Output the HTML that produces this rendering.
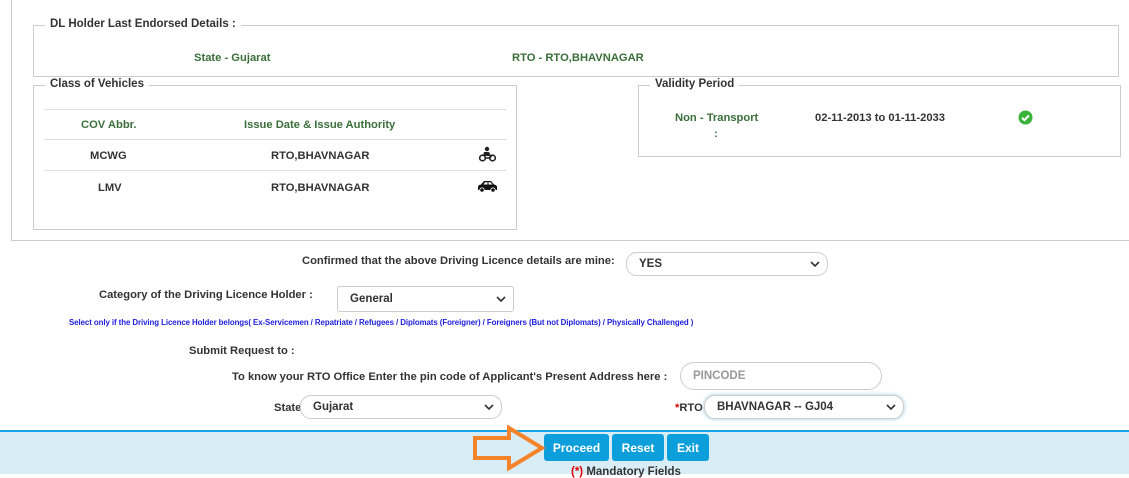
<!DOCTYPE html>
<html><head><style>
*{margin:0;padding:0;box-sizing:border-box}
body{width:1129px;height:474px;overflow:hidden;background:#fff;font-family:"Liberation Sans",Arial,sans-serif;font-weight:bold;font-size:11.2px;color:#333;position:relative}
.a{position:absolute;white-space:nowrap}
.fs{position:absolute;border:1px solid #ccc}
.lg{position:absolute;background:#fff;padding:0 5px;top:-8px;color:#333;font-size:11.5px}
.g{color:#3a6e3a}
.hl{position:absolute;left:44px;width:462px;height:1px;background:#ddd}
.sel{position:absolute;border:1px solid #ccc;background:#fff;font-size:11.5px;padding-left:12px;display:flex;align-items:center;color:#333}
.sel svg{position:absolute;right:7px;top:50%;margin-top:-3px}
.btn{position:absolute;top:434px;height:27px;background:#0d9fdc;color:#fff;border-radius:3px;font-size:12px;display:flex;align-items:center;justify-content:center}
</style></head><body>
<div class="a" style="left:11px;top:0;width:1px;height:241px;background:#ccc"></div>
<div class="a" style="left:11px;top:240px;width:1118px;height:1px;background:#ccc"></div>

<div class="fs" style="left:33px;top:25px;width:1086px;height:52px"><span class="lg" style="left:11px">DL Holder Last Endorsed Details :</span></div>
<div class="a g" style="left:194px;top:52px">State - Gujarat</div>
<div class="a g" style="left:512px;top:52px">RTO - RTO,BHAVNAGAR</div>

<div class="fs" style="left:33px;top:85px;width:484px;height:145px"><span class="lg" style="left:11px">Class of Vehicles</span></div>
<div class="hl" style="top:109px"></div>
<div class="hl" style="top:139px"></div>
<div class="hl" style="top:170px"></div>
<div class="a g" style="left:81px;top:119px">COV Abbr.</div>
<div class="a g" style="left:244px;top:119px">Issue Date &amp; Issue Authority</div>
<div class="a" style="left:90px;top:150px">MCWG</div>
<div class="a" style="left:271px;top:150px">RTO,BHAVNAGAR</div>
<div class="a" style="left:98px;top:182px">LMV</div>
<div class="a" style="left:271px;top:182px">RTO,BHAVNAGAR</div>
<svg class="a" style="left:479px;top:146px" width="17" height="16" viewBox="0 0 17 16"><circle cx="8" cy="3" r="2.2" fill="#222"/><path d="M5 6h5l2 4H4z" fill="#222"/><circle cx="3.5" cy="12" r="2.8" fill="none" stroke="#222" stroke-width="1.6"/><circle cx="13.5" cy="12" r="2.8" fill="none" stroke="#222" stroke-width="1.6"/><path d="M6 12h5l2-3" stroke="#222" stroke-width="1.5" fill="none"/></svg>
<svg class="a" style="left:477px;top:179px" width="21" height="14" viewBox="0 0 21 14"><path d="M1 8q0-2 3-2.5L7 2h7l3 3.5q3 .5 3 2.5v3H1z" fill="#111"/><path d="M8 3.2h2.5v2.3H6.5zM11.5 3.2h2l2 2.3h-4z" fill="#fff"/><circle cx="5" cy="11" r="2.2" fill="#111" stroke="#fff" stroke-width=".8"/><circle cx="16" cy="11" r="2.2" fill="#111" stroke="#fff" stroke-width=".8"/></svg>

<div class="fs" style="left:638px;top:85px;width:483px;height:72px"><span class="lg" style="left:11px">Validity Period</span></div>
<div class="a g" style="left:675px;top:112px">Non - Transport</div>
<div class="a g" style="left:714px;top:128px">:</div>
<div class="a" style="left:815px;top:112px">02-11-2013 to 01-11-2033</div>
<svg class="a" style="left:1018px;top:110px" width="15" height="15" viewBox="0 0 15 15"><circle cx="7.5" cy="7.5" r="7" fill="#3bb33b"/><path d="M4 7.8l2.4 2.3 4.6-4.6" stroke="#fff" stroke-width="2" fill="none"/></svg>

<div class="a" style="left:302px;top:255px">Confirmed that the above Driving Licence details are mine:</div>
<div class="sel" style="left:626px;top:252px;width:202px;height:24px;border-radius:11px">YES<svg width="10" height="6"><path d="M1 1l4 4 4-4" stroke="#333" stroke-width="1.6" fill="none"/></svg></div>

<div class="a" style="left:99px;top:289px">Category of the Driving Licence Holder :</div>
<div class="sel" style="left:337px;top:286px;width:177px;height:26px;border-radius:3px">General<svg width="10" height="6"><path d="M1 1l4 4 4-4" stroke="#333" stroke-width="1.6" fill="none"/></svg></div>
<div class="a" style="left:69px;top:318px;font-size:7.9px;color:#2020e0;letter-spacing:-0.08px">Select only if the Driving Licence Holder belongs( Ex-Servicemen / Repatriate / Refugees / Diplomats (Foreigner) / Foreigners (But not Diplomats) / Physically Challenged )</div>

<div class="a" style="left:189px;top:345px">Submit Request to :</div>
<div class="a" style="left:232px;top:371px">To know your RTO Office Enter the pin code of Applicant's Present Address here :</div>
<div class="sel" style="left:680px;top:362px;width:202px;height:28px;border-radius:14px;color:#999">PINCODE</div>

<div class="a" style="left:274px;top:402px">State</div>
<div class="sel" style="left:300px;top:395px;width:202px;height:24px;border-radius:11px">Gujarat<svg width="10" height="6"><path d="M1 1l4 4 4-4" stroke="#333" stroke-width="1.6" fill="none"/></svg></div>
<div class="a" style="left:675px;top:402px"><span style="color:#d00">*</span>RTO</div>
<div class="sel" style="left:704px;top:395px;width:200px;height:24px;border-radius:11px;box-shadow:0 0 4px #9cd">BHAVNAGAR -- GJ04<svg width="10" height="6"><path d="M1 1l4 4 4-4" stroke="#333" stroke-width="1.6" fill="none"/></svg></div>

<div class="a" style="left:0;top:430px;width:1129px;height:44px;background:#d9edf7;border-top:2px solid #1aa3e8"></div>
<div class="btn" style="left:544px;width:65px">Proceed</div>
<div class="btn" style="left:612px;width:52px">Reset</div>
<div class="btn" style="left:667px;width:42px">Exit</div>
<svg class="a" style="left:470px;top:425px" width="76" height="46" viewBox="0 0 76 46"><path d="M5 13h34V3l33 20-33 20V33H5z" fill="none" stroke="#f5832a" stroke-width="4" stroke-linejoin="miter"/></svg>
<div class="a" style="left:571px;top:466px;font-size:11.5px"><span style="color:#d00">(*)</span> Mandatory Fields</div>
</body></html>
